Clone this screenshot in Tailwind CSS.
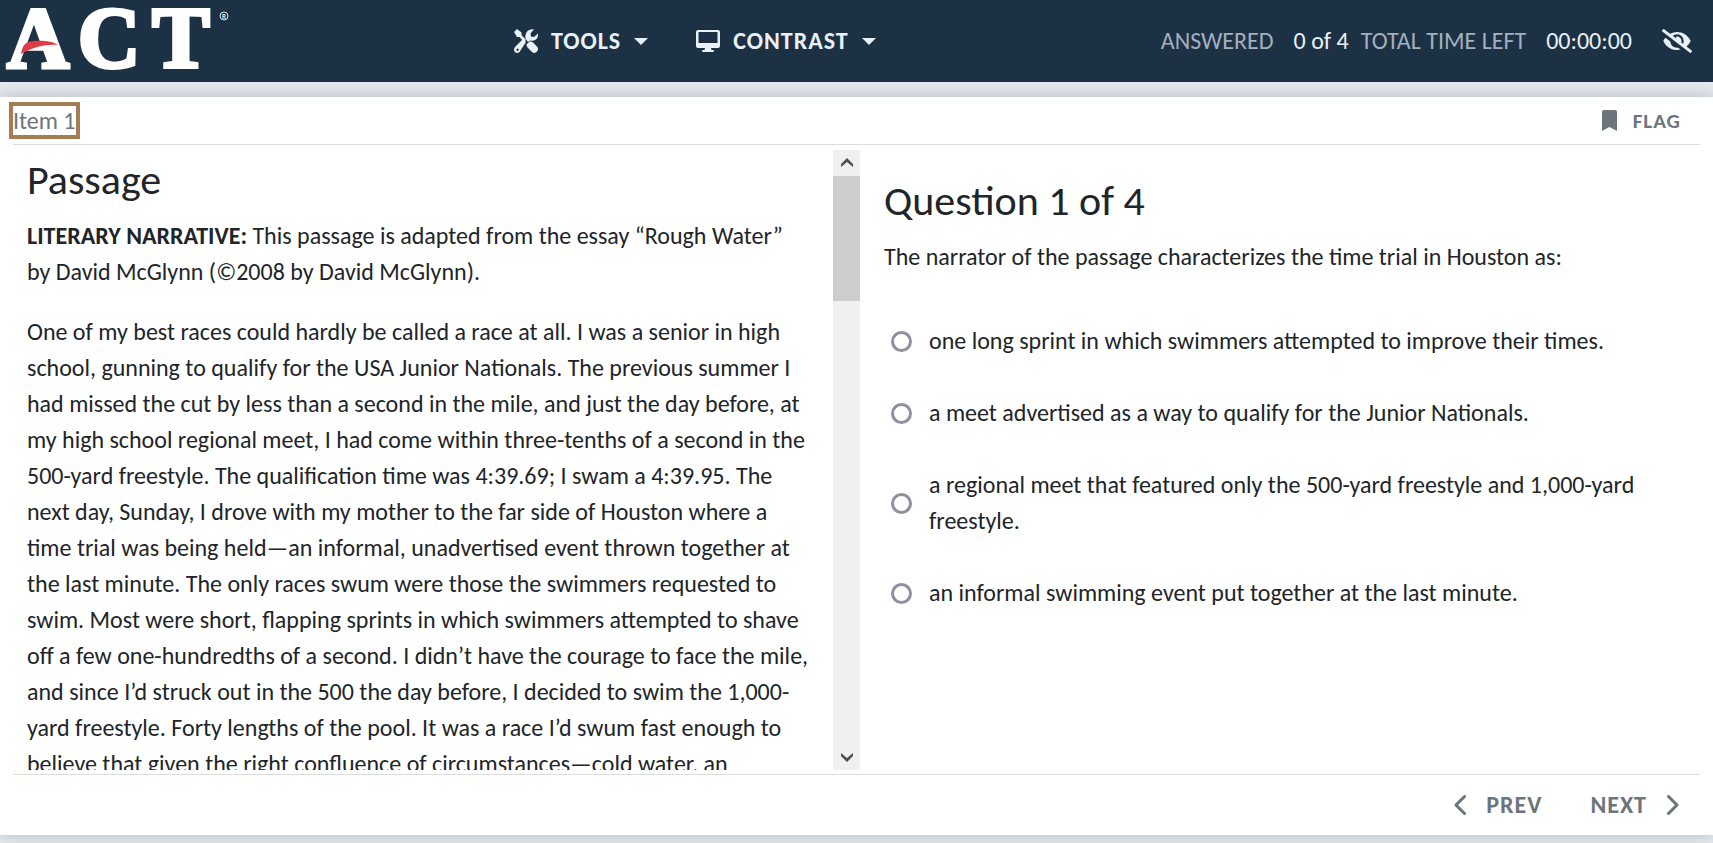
<!DOCTYPE html>
<html lang="en">
<head>
<meta charset="utf-8">
<title>Item 1</title>
<script src="https://cdn.jsdelivr.net/npm/@tailwindcss/browser@4"></script>
</head>
<body class="bg-[#e4e9ed] font-['Carlito','Lato',sans-serif] text-2xl text-[#212529]">
<div class="flex h-screen flex-col overflow-hidden">
  <header class="flex h-[82px] shrink-0 items-center bg-[#1d3145] pr-[21px] text-[#e8f0f8]">
    <svg class="h-[82px] w-[232px] shrink-0 overflow-visible" viewBox="0 0 232 82" role="img" aria-label="ACT">
      <g fill="#fff" stroke="#fff" stroke-width="4" font-family="Liberation Serif, serif" font-weight="bold" font-size="86" text-anchor="middle">
        <text x="38" y="67">A</text><text x="109" y="67">C</text><text x="181" y="67">T</text>
      </g>
      <path d="M21 54C22 48 24 44 28 42C37 40 51 40 58 45C43 44 32 48 21 54Z" fill="#e03c46"/>
      <circle cx="224" cy="16" r="4" fill="none" stroke="#dfe6ec"/>
      <text x="224" y="19" text-anchor="middle" font-size="7" font-weight="bold" fill="#dfe6ec">R</text>
    </svg>
    <nav class="ml-[282px] flex items-center gap-12 font-bold tracking-[1px]">
      <button class="flex items-center gap-[13px]">
        <svg class="size-6" viewBox="0 0 24 24" fill="currentColor"><path d="M3 0L7.500 3.500V6L12 11L10 13L5.500 8H3L0 3Z"/><path d="M12.500 15.500L15.500 12.500Q17.500 12 19 13.500L23 17.500Q25 20 23 22.500Q20.500 25 18 23L13.500 18.500Q12.500 17 12.500 15.500Z"/><path fill-rule="evenodd" d="M1 18L9 10L12 13L5.500 23Q3 25 1 23Q-1 21 1 18ZM3.500 19.500A1.200 1.200 0 1 0 3.600 19.500Z"/><path d="M11.500 9.500Q10.500 5 13.500 2Q16.500 -0.500 20 0.500L16.500 4.500L17 7.500L20 8L24 4.500Q24.500 8 22 10.500Q19 12.500 16 11.500L14 13Z"/></svg>
        <span>TOOLS</span>
        <svg class="h-[7px] w-[14px]" viewBox="0 0 14 7" fill="currentColor"><path d="M0 0H14L7 7Z"/></svg>
      </button>
      <button class="flex items-center gap-[13px]">
        <svg class="h-[22px] w-6" viewBox="0 0 24 22" fill="currentColor"><path fill-rule="evenodd" d="M2 0H22Q24 0 24 2V16Q24 18 22 18H15L15.500 20H17Q18 20 18 21T17 22H7Q6 22 6 21T7 20H8.500L9 18H2Q0 18 0 16V2Q0 0 2 0ZM2.500 2V13H21.500V2Z"/></svg>
        <span>CONTRAST</span>
        <svg class="h-[7px] w-[14px]" viewBox="0 0 14 7" fill="currentColor"><path d="M0 0H14L7 7Z"/></svg>
      </button>
    </nav>
    <div class="ml-auto flex items-center whitespace-nowrap">
      <span class="text-[#a3b0bd]">ANSWERED</span><span class="ml-5">0 of 4</span>
      <span class="ml-3 text-[#a3b0bd]">TOTAL TIME LEFT</span><span class="ml-5">00:00:00</span>
      <button class="ml-[30px]" aria-label="Hide timer"><svg class="h-6 w-[30px]" viewBox="0 0 640 512" fill="currentColor"><path d="M320 400c-75.850 0-137.250-58.710-142.900-133.110L72.200 185.820c-13.790 17.300-26.480 35.590-36.720 55.590a32.350 32.350 0 0 0 0 29.190C89.710 376.410 197.070 448 320 448c26.910 0 52.870-4 77.890-10.460L346 397.390a144.130 144.130 0 0 1-26 2.610zm313.820 58.100l-110.550-85.440a331.250 331.250 0 0 0 81.250-102.070 32.350 32.350 0 0 0 0-29.190C550.290 135.590 442.930 64 320 64a308.150 308.150 0 0 0-147.320 37.700L45.460 3.370A16 16 0 0 0 23 6.180L3.370 31.450A16 16 0 0 0 6.180 53.900l588.360 454.730a16 16 0 0 0 22.460-2.810l19.640-25.270a16 16 0 0 0-2.820-22.450zm-183.720-142l-39.300-30.380A94.750 94.750 0 0 0 416 256a94.760 94.760 0 0 0-121.310-92.210A47.650 47.650 0 0 1 304 192a46.640 46.640 0 0 1-1.540 10l-73.610-56.890A142.310 142.310 0 0 1 320 112a143.920 143.920 0 0 1 144 144c0 21.630-5.290 41.790-13.900 60.110z"/></svg></button>
    </div>
  </header>

  <main class="mt-[15px] mb-2 flex min-h-0 flex-1 flex-col bg-white px-[13px] shadow-[0_0_16px_rgba(0,0,0,0.2)]">
    <div class="flex h-12 shrink-0 items-center justify-between border-b border-[#dadcde] text-[#6c757d]">
      <h1 class="leading-[29px] outline-4 outline-[#a67c52]">Item 1</h1>
      <button class="mr-[19px] flex items-center gap-4 text-[21px] font-bold tracking-[1px]"><svg class="h-[21px] w-[15px]" viewBox="0 0 15 21" fill="currentColor"><path d="M0 2Q0 0 2 0H13Q15 0 15 2V21L7.500 17L0 21Z"/></svg>FLAG</button>
    </div>
    <div class="flex min-h-0 flex-1 pt-[5px] pb-1">
      <section class="flex min-w-0 basis-[847px]">
        <div class="min-w-0 flex-1 overflow-hidden pr-[22px] pl-[14px] leading-9">
          <h2 class="mt-1 mb-3 text-[42px] leading-[52px]">Passage</h2>
          <p class="mb-6"><strong>LITERARY NARRATIVE:</strong> This passage is adapted from the essay “Rough Water”<br>by David McGlynn (©2008 by David McGlynn).</p>
          <p>One of my best races could hardly be called a race at all. I was a senior in high school, gunning to qualify for the USA Junior Nationals. The previous summer I had missed the cut by less than a second in the mile, and just the day before, at my high school regional meet, I had come within three-tenths of a second in the 500-yard freestyle. The qualification time was 4:39.69; I swam a 4:39.95. The next day, Sunday, I drove with my mother to the far side of Houston where a time trial was being held—an informal, unadvertised event thrown together at the last minute. The only races swum were those the swimmers requested to swim. Most were short, flapping sprints in which swimmers attempted to shave off a few one-hundredths of a second. I didn’t have the courage to face the mile, and since I’d struck out in the 500 the day before, I decided to swim the 1,000-yard freestyle. Forty lengths of the pool. It was a race I’d swum fast enough to believe that given the right confluence of circumstances—cold water, an</p>
        </div>
        <div class="flex w-[27px] shrink-0 flex-col bg-[#f0f0f0] text-[#505050]">
          <button class="flex h-[26px] items-center justify-center" aria-label="Scroll up"><svg class="h-[10px] w-3" viewBox="0 0 12 10"><path d="M0 9V6L6 0L12 6V9L6 4Z" fill="currentColor"/></svg></button>
          <div class="h-[125px] bg-[#cdcdcd]"></div>
          <button class="mt-auto flex h-[26px] items-center justify-center" aria-label="Scroll down"><svg class="h-[10px] w-3" viewBox="0 0 12 10"><path d="M0 1V4L6 10L12 4V1L6 6Z" fill="currentColor"/></svg></button>
        </div>
      </section>
      <section class="min-w-0 flex-1 pt-[25px] pl-6 leading-9">
        <h2 class="mb-3 text-[42px] leading-[52px]">Question 1 of 4</h2>
        <form>
          <p class="mb-12">The narrator of the passage characterizes the time trial in Houston as:</p>
          <div class="flex flex-col gap-9 pl-[7px]">
            <label class="flex items-center gap-[17px]"><input type="radio" name="answer" class="size-[21px] shrink-0 appearance-none rounded-full border-3 border-[#8f8f9d] bg-white"><span>one long sprint in which swimmers attempted to improve their times.</span></label>
            <label class="flex items-center gap-[17px]"><input type="radio" name="answer" class="size-[21px] shrink-0 appearance-none rounded-full border-3 border-[#8f8f9d] bg-white"><span>a meet advertised as a way to qualify for the Junior Nationals.</span></label>
            <label class="flex items-center gap-[17px]"><input type="radio" name="answer" class="size-[21px] shrink-0 appearance-none rounded-full border-3 border-[#8f8f9d] bg-white"><span>a regional meet that featured only the 500-yard freestyle and 1,000-yard freestyle.</span></label>
            <label class="flex items-center gap-[17px]"><input type="radio" name="answer" class="size-[21px] shrink-0 appearance-none rounded-full border-3 border-[#8f8f9d] bg-white"><span>an informal swimming event put together at the last minute.</span></label>
          </div>
        </form>
      </section>
    </div>
    <footer class="flex h-[61px] shrink-0 items-center justify-end gap-12 border-t border-[#dadcde] pr-[21px] font-bold tracking-[1px] text-[#6c757d]">
      <button class="flex items-center gap-5"><svg class="h-5 w-3" viewBox="0 0 12 20" fill="none" stroke="currentColor" stroke-width="3" stroke-linecap="round" stroke-linejoin="round"><path d="M10.500 1.500L2 10L10.500 18.500"/></svg>PREV</button>
      <button class="flex items-center gap-5">NEXT<svg class="h-5 w-3" viewBox="0 0 12 20" fill="none" stroke="currentColor" stroke-width="3" stroke-linecap="round" stroke-linejoin="round"><path d="M1.500 1.500L10 10L1.500 18.500"/></svg></button>
    </footer>
  </main>
</div>
</body>
</html>
